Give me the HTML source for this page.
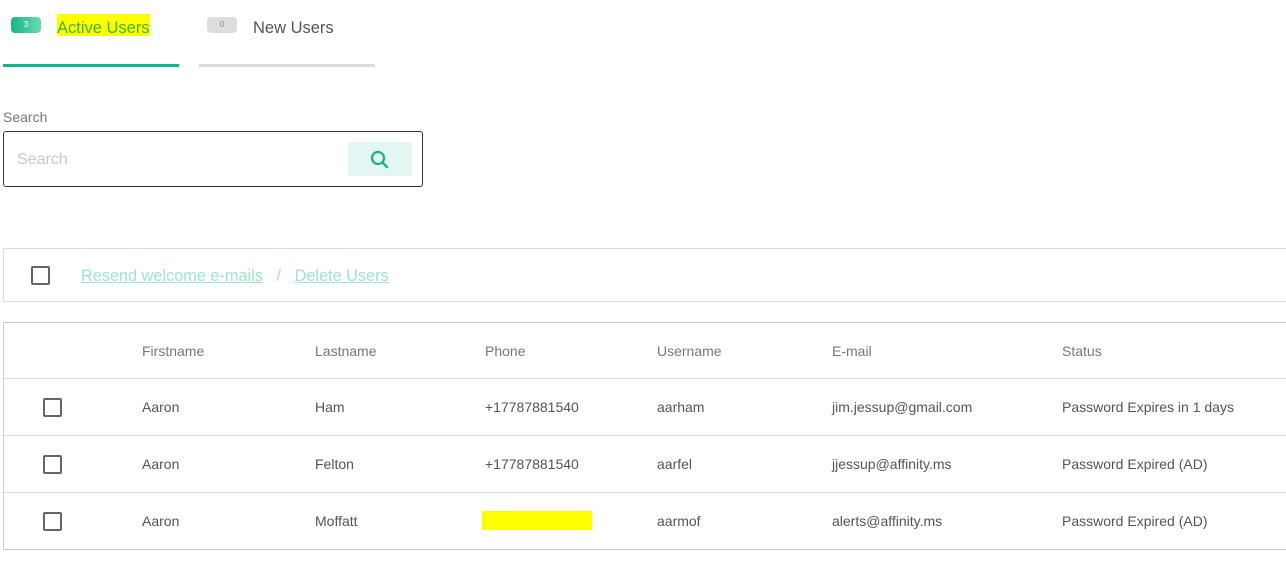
<!DOCTYPE html>
<html><head><style>
body{margin:0;width:1286px;height:567px;background:#fff;font-family:"Liberation Sans",sans-serif;position:relative;overflow:hidden;color:#555}
.a{position:absolute}
.badge{position:absolute;width:30px;height:16px;border-radius:4px;font-size:8px;text-align:center;line-height:16px}
.cb{position:absolute;width:15px;height:15px;border:2px solid #666;border-radius:2px}
.t{position:absolute;font-size:14px;color:#555}
.h{position:absolute;font-size:14px;color:#777}
.line{position:absolute;left:4px;width:1290px;height:1px;background:#ddd}
</style></head><body>
<div class="badge" style="left:11px;top:17px;background:linear-gradient(90deg,#13b886,#6ed9b0);color:#fff">3</div>
<div class="a" style="left:57px;top:14px;width:93px;height:22px;background:#ff0"></div>
<div class="a" style="left:57px;top:19px;font-size:16.5px;color:#3fb52b">Active Users</div>
<div class="badge" style="left:207px;top:17px;background:#ddd;color:#888">0</div>
<div class="a" style="left:253px;top:19px;font-size:16.5px;color:#555">New Users</div>
<div class="a" style="left:3px;top:64px;width:176px;height:3px;background:#13b48a"></div>
<div class="a" style="left:199px;top:64px;width:176px;height:3px;background:#ddd"></div>
<div class="a" style="left:3px;top:109px;font-size:14px;color:#777">Search</div>
<div class="a" style="left:3px;top:131px;width:418px;height:54px;border:1px solid #333;border-radius:3px"></div>
<div class="a" style="left:17px;top:151px;font-size:16px;color:#c8c8c8">Search</div>
<div class="a" style="left:348px;top:142px;width:64px;height:34px;background:#e3f6f1;border-radius:3px">
<svg width="64" height="34"><circle cx="30" cy="16" r="6" fill="none" stroke="#13b48a" stroke-width="2.2"/><line x1="34.5" y1="20.5" x2="39" y2="25" stroke="#13b48a" stroke-width="2.4" stroke-linecap="round"/></svg></div>
<div class="a" style="left:3px;top:248px;width:1290px;height:52px;border:1px solid #ddd"></div>
<div class="cb" style="left:31px;top:266px"></div>
<div class="a" style="left:81px;top:267px;font-size:16.3px;color:#9ee4cf"><u>Resend welcome e-mails</u>&nbsp;&nbsp; / &nbsp;&nbsp;<u>Delete Users</u></div>
<div class="a" style="left:3px;top:322px;width:1290px;height:226px;border:1px solid #ccc"></div>
<div class="line" style="top:378px"></div>
<div class="line" style="top:435px"></div>
<div class="line" style="top:492px"></div>
<div class="h" style="left:142px;top:343px">Firstname</div>
<div class="h" style="left:315px;top:343px">Lastname</div>
<div class="h" style="left:485px;top:343px">Phone</div>
<div class="h" style="left:657px;top:343px">Username</div>
<div class="h" style="left:832px;top:343px">E-mail</div>
<div class="h" style="left:1062px;top:343px">Status</div>

<div class="cb" style="left:43px;top:398px"></div>
<div class="t" style="left:142px;top:399px">Aaron</div><div class="t" style="left:315px;top:399px">Ham</div><div class="t" style="left:485px;top:399px">+17787881540</div><div class="t" style="left:657px;top:399px">aarham</div><div class="t" style="left:832px;top:399px">jim.jessup@gmail.com</div><div class="t" style="left:1062px;top:399px">Password Expires in 1 days</div>

<div class="cb" style="left:43px;top:455px"></div>
<div class="t" style="left:142px;top:456px">Aaron</div><div class="t" style="left:315px;top:456px">Felton</div><div class="t" style="left:485px;top:456px">+17787881540</div><div class="t" style="left:657px;top:456px">aarfel</div><div class="t" style="left:832px;top:456px">jjessup@affinity.ms</div><div class="t" style="left:1062px;top:456px">Password Expired (AD)</div>

<div class="cb" style="left:43px;top:512px"></div>
<div class="t" style="left:142px;top:513px">Aaron</div><div class="t" style="left:315px;top:513px">Moffatt</div>
<div class="a" style="left:482px;top:511px;width:110px;height:19px;background:#ff0"></div>
<div class="t" style="left:657px;top:513px">aarmof</div><div class="t" style="left:832px;top:513px">alerts@affinity.ms</div><div class="t" style="left:1062px;top:513px">Password Expired (AD)</div>
</body></html>
